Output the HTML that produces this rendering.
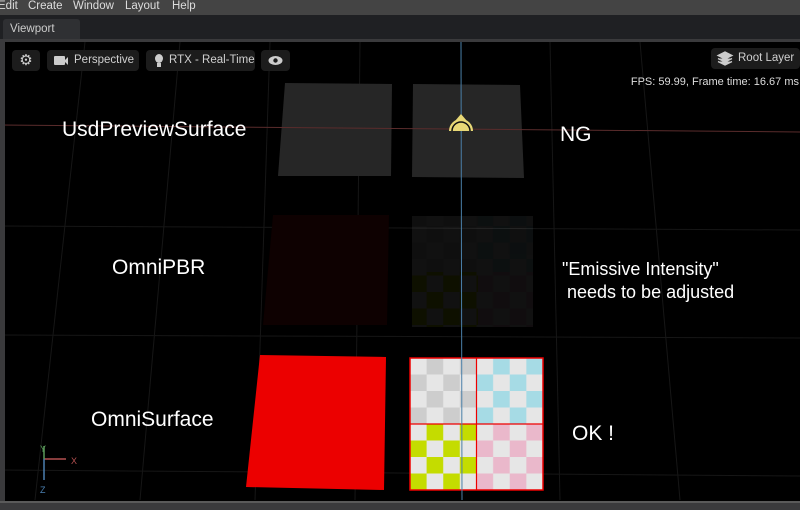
<!DOCTYPE html>
<html><head><meta charset="utf-8"><style>
*{margin:0;padding:0;box-sizing:border-box}
body{width:800px;height:510px;overflow:hidden;background:#000;font-family:"Liberation Sans",sans-serif;position:relative}
.menu{position:absolute;left:0;top:0;width:800px;height:15px;background:#444;color:#ddd;font-size:11.5px;line-height:13px}
.menu span{position:absolute;top:0}
.tabs{position:absolute;left:0;top:15px;width:800px;height:26px;background:#1f2023}
.tab{position:absolute;left:3px;top:4px;width:77px;height:22px;background:#2f3033;color:#ccc;font-size:11.5px;padding:4px 7px;border-radius:3px 3px 0 0}
.sep{position:absolute;left:0;top:39px;width:800px;height:3px;background:#3a3a3c}
.lb{position:absolute;left:0;top:42px;width:5px;height:468px;background:#3a3a3c}
.bb{position:absolute;left:0;top:501px;width:800px;height:9px;background:#3a3a3c;border-top:2px solid #5a5a5a}
.btn{position:absolute;top:50px;height:21px;background:#1c1c1c;border-radius:4px;color:#d0d0d0;font-size:11.5px;line-height:21px}
.t{position:absolute;color:#fff;font-size:21px;white-space:nowrap}
</style></head><body>
<svg style="position:absolute;left:0;top:0" width="800" height="510">
<defs>
<pattern id="pg" x="410" y="358" width="33.25" height="33" patternUnits="userSpaceOnUse"><rect width="33.25" height="33" fill="#e6e6e6"/><rect x="16.6" width="16.6" height="16.5" fill="#cdcdcd"/><rect y="16.5" width="16.6" height="16.5" fill="#cdcdcd"/></pattern>
<pattern id="pc" x="410" y="358" width="33.25" height="33" patternUnits="userSpaceOnUse"><rect width="33.25" height="33" fill="#e6e6e6"/><rect x="16.6" width="16.6" height="16.5" fill="#a6dbe5"/><rect y="16.5" width="16.6" height="16.5" fill="#a6dbe5"/></pattern>
<pattern id="py" x="410" y="358" width="33.25" height="33" patternUnits="userSpaceOnUse"><rect width="33.25" height="33" fill="#e6e6e6"/><rect x="16.6" width="16.6" height="16.5" fill="#c4dc00"/><rect y="16.5" width="16.6" height="16.5" fill="#c4dc00"/></pattern>
<pattern id="pp" x="410" y="358" width="33.25" height="33" patternUnits="userSpaceOnUse"><rect width="33.25" height="33" fill="#e6e6e6"/><rect x="16.6" width="16.6" height="16.5" fill="#eab8cb"/><rect y="16.5" width="16.6" height="16.5" fill="#eab8cb"/></pattern>
</defs>
<g stroke="#161616" stroke-width="1">
<line x1="0" y1="226" x2="800" y2="230"/><line x1="0" y1="335" x2="800" y2="338"/><line x1="0" y1="470" x2="800" y2="476"/>
<line x1="35" y1="500" x2="85" y2="42"/><line x1="140" y1="500" x2="180" y2="42"/><line x1="255" y1="500" x2="270" y2="42"/><line x1="355" y1="500" x2="360" y2="42"/><line x1="560" y1="500" x2="550" y2="42"/><line x1="680" y1="500" x2="640" y2="42"/>
</g>
<polygon points="285,83 392,84 391,176 278,176" fill="#262626"/>
<polygon points="413,84 520,85 524,178 412,177" fill="#262626"/>
<polygon points="273,215 389,215 387,325 263,325" fill="#0e0101"/>
<g opacity="0.07"><rect x="412" y="216" width="66" height="56" fill="url(#pg)"/><rect x="478" y="216" width="55" height="56" fill="url(#pc)"/><rect x="412" y="272" width="66" height="55" fill="url(#py)"/><rect x="478" y="272" width="55" height="55" fill="url(#pp)"/></g>
<line x1="0" y1="125" x2="800" y2="132" stroke="#5a2c2c" stroke-width="1"/>
<polygon points="260,355 386,357 384,490 246,487" fill="#ec0000"/>
<rect x="410" y="358" width="66.5" height="66" fill="url(#pg)"/>
<rect x="476.5" y="358" width="66.5" height="66" fill="url(#pc)"/>
<rect x="410" y="424" width="66.5" height="66" fill="url(#py)"/>
<rect x="476.5" y="424" width="66.5" height="66" fill="url(#pp)"/>
<rect x="410" y="358" width="133" height="132" fill="none" stroke="#e00" stroke-width="1.5"/>
<line x1="476.5" y1="358" x2="476.5" y2="490" stroke="#e00" stroke-width="1.2"/>
<line x1="410" y1="424" x2="543" y2="424" stroke="#e00" stroke-width="1.2"/>
<line x1="461" y1="42" x2="462" y2="500" stroke="#4a7fa8" stroke-width="1"/>
<path d="M449,131 A12,12 0 0 1 473,131 Z" fill="#e8d876"/><path d="M455,121 L461,114 L467,121 Z" fill="#e8d876"/>
<path d="M452,131 A9,9 0 0 1 470,131" fill="none" stroke="#111" stroke-width="1.5"/>
<line x1="44" y1="459" x2="66" y2="459" stroke="#b45050" stroke-width="1.5"/>
<line x1="44" y1="446" x2="44" y2="459" stroke="#5a9a5a" stroke-width="1.5"/>
<line x1="44" y1="459" x2="44" y2="480" stroke="#4a7fb0" stroke-width="1.5"/>
<text x="40" y="452" fill="#5a9a5a" font-size="9" font-family="Liberation Sans">Y</text>
<text x="71" y="464" fill="#b45050" font-size="9" font-family="Liberation Sans">X</text>
<text x="40" y="493" fill="#4a7fb0" font-size="9" font-family="Liberation Sans">Z</text>
</svg>
<div class="menu"><span style="left:-2px">Edit</span><span style="left:28px">Create</span><span style="left:73px">Window</span><span style="left:125px">Layout</span><span style="left:172px">Help</span></div>
<div class="tabs"><div class="tab">Viewport</div></div>
<div class="sep"></div><div class="lb"></div><div class="bb"></div>
<div class="btn" style="left:12px;width:28px;text-align:center;font-size:15px">⚙</div>
<div class="btn" style="left:47px;width:92px"><span style="position:absolute;left:7px;top:6px;width:11px;height:9px;background:#ccc;border-radius:1px"></span><span style="position:absolute;left:17px;top:7px;border:4px solid transparent;border-right:4px solid #ccc;border-left:0"></span><span style="position:absolute;left:27px">Perspective</span></div>
<div class="btn" style="left:146px;width:109px"><span style="position:absolute;left:9px;top:4px;width:8px;height:9px;background:#ccc;border-radius:50%"></span><span style="position:absolute;left:11px;top:13px;width:4px;height:4px;background:#ccc"></span><span style="position:absolute;left:23px">RTX - Real-Time</span></div>
<div class="btn" style="left:261px;width:29px"><svg width="29" height="21"><ellipse cx="14.5" cy="10.5" rx="7" ry="4.5" fill="#ccc"/><circle cx="14.5" cy="10.5" r="2.2" fill="#1c1c1c"/></svg></div>
<div class="btn" style="left:711px;top:48px;width:89px"><svg width="20" height="21" style="position:absolute;left:5px"><path d="M9,4 L16,7.5 L9,11 L2,7.5Z M2,10.5 L9,14 L16,10.5 M2,13.5 L9,17 L16,13.5" fill="#ccc" stroke="#ccc" stroke-width="1.3"/></svg><span style="position:absolute;left:27px">Root Layer</span></div>
<div style="position:absolute;right:1px;top:76px;color:#ddd;font-size:11px;white-space:nowrap">FPS: 59.99, Frame time: 16.67 ms</div>
<div class="t" style="left:62px;top:118px">UsdPreviewSurface</div>
<div class="t" style="left:560px;top:123px">NG</div>
<div class="t" style="left:112px;top:256px">OmniPBR</div>
<div class="t" style="left:562px;top:258px;font-size:18px;line-height:23px">"Emissive Intensity"<br>&nbsp;needs to be adjusted</div>
<div class="t" style="left:91px;top:408px">OmniSurface</div>
<div class="t" style="left:572px;top:422px">OK !</div>
</body></html>
